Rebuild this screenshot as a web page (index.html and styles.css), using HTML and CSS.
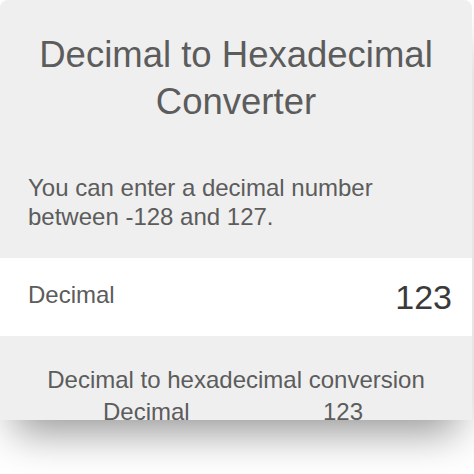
FILE: index.html
```html
<!DOCTYPE html>
<html lang="en">
  <head>
    <meta charset="UTF-8" />
    <meta name="viewport" content="width=device-width, initial-scale=1.0" />
    <title>Decimal to Hexadecimal Converter</title>
    <link rel="stylesheet" href="styles.css">
  </head>
  <body>
    <div class="page">
      <div class="card">
        <!-- Cabecera -->
        <h1 class="title">Decimal to Hexadecimal Converter</h1>
        <p class="hint">You can enter a decimal number between -128 and 127.</p>

        <!-- Entrada -->
        <div class="field">
          <span class="field-label">Decimal</span>
          <span class="field-value">123</span>
        </div>

        <!-- Resultado -->
        <div class="result">
          <div class="result-title">Decimal to hexadecimal conversion</div>
          <div class="result-row">
            <span>Decimal</span>
            <span>123</span>
          </div>
        </div>
      </div>
    </div>
  </body>
</html>
```

FILE: styles.css
```css
body {
  margin: 0;
  background-color: #fff;
  font-family: "Liberation Sans", Arial, sans-serif;
  color: #5c5c5c;
}
.page {
  height: 474px;
}
.card {
  position: relative;
  width: 472px;
  height: 420px;
  overflow: hidden;
  background-color: #efefef;
  border-radius: 8px 8px 0 0;
  box-shadow: 0 26px 40px -14px rgba(0, 0, 0, 0.42);
}
.title {
  margin: 0;
  padding: 31px 20px 0;
  font-size: 36.5px;
  font-weight: normal;
  line-height: 47px;
  text-align: center;
}
.hint {
  margin: 48px 0 27px;
  padding: 0 28px;
  font-size: 24px;
  line-height: 29px;
}
.field {
  display: flex;
  justify-content: space-between;
  align-items: center;
  height: 78px;
  padding: 0 20px 0 28px;
  background-color: #fff;
}
.field-label {
  font-size: 24px;
  padding-bottom: 4px;
}
.field-value {
  font-size: 34px;
  color: #3a3a3a;
}
.result {
  padding-top: 28px;
  font-size: 24px;
  line-height: 32px;
}
.result-title {
  text-align: center;
}
.result-row {
  display: grid;
  grid-template-columns: 220px auto;
  padding-left: 103px;
}
```
